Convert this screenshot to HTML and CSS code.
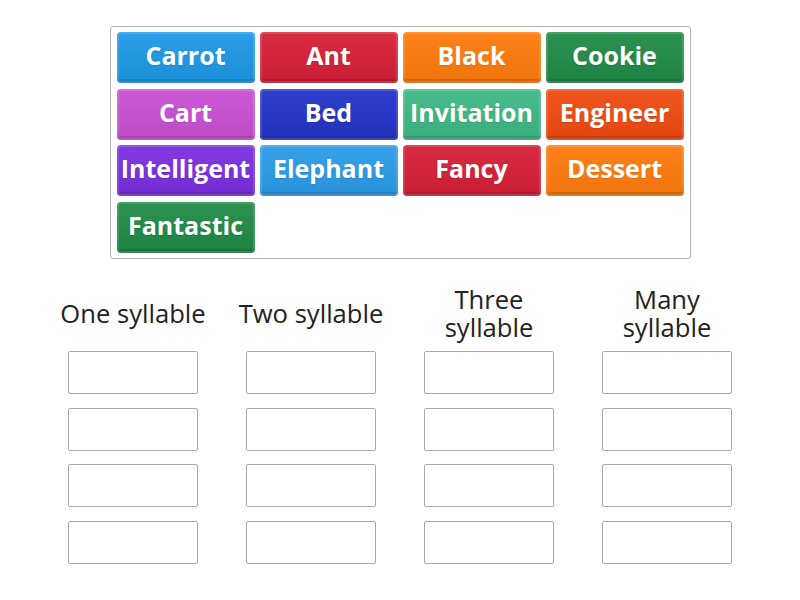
FILE: index.html
```html
<!DOCTYPE html>
<html>
<head>
<meta charset="utf-8">
<link rel="stylesheet" href="styles.css">
</head>
<body>
<div class="page">
  <div class="bank">
    <div class="tile c-blue">Carrot</div>
    <div class="tile c-red">Ant</div>
    <div class="tile c-orange">Black</div>
    <div class="tile c-green">Cookie</div>
    <div class="tile c-pink">Cart</div>
    <div class="tile c-navy">Bed</div>
    <div class="tile c-teal">Invitation</div>
    <div class="tile c-vermil">Engineer</div>
    <div class="tile c-purple">Intelligent</div>
    <div class="tile c-sky">Elephant</div>
    <div class="tile c-red">Fancy</div>
    <div class="tile c-orange">Dessert</div>
    <div class="tile c-green">Fantastic</div>
  </div>
  <div class="groups">
    <div class="group">
      <div class="label">One syllable</div>
      <div class="slot"></div><div class="slot"></div><div class="slot"></div><div class="slot"></div>
    </div>
    <div class="group">
      <div class="label">Two syllable</div>
      <div class="slot"></div><div class="slot"></div><div class="slot"></div><div class="slot"></div>
    </div>
    <div class="group">
      <div class="label">Three syllable</div>
      <div class="slot"></div><div class="slot"></div><div class="slot"></div><div class="slot"></div>
    </div>
    <div class="group">
      <div class="label">Many syllable</div>
      <div class="slot"></div><div class="slot"></div><div class="slot"></div><div class="slot"></div>
    </div>
  </div>
</div>
</body>
</html>
```

FILE: styles.css
```css
html, body {
  margin: 0;
  padding: 0;
  background: #fff;
}
body {
  font-family: "Open Sans", "Liberation Sans", sans-serif;
  width: 800px;
  height: 600px;
  overflow: hidden;
}
.page {
  display: flex;
  flex-direction: column;
  align-items: center;
  padding-top: 26px;
}
.bank {
  box-sizing: border-box;
  width: 581px;
  height: 233px;
  border: 1px solid #b4b4b4;
  border-radius: 3px;
  padding: 5px 6px 6px;
  display: grid;
  grid-template-columns: repeat(4, 138px);
  grid-auto-rows: 51px;
  column-gap: 5px;
  row-gap: 5.5px;
  align-content: start;
}
.tile {
  border-radius: 4px;
  color: #fff;
  font-weight: 700;
  font-size: 25px;
  display: flex;
  align-items: center;
  justify-content: center;
  white-space: nowrap;
  padding-bottom: 5px;
  box-sizing: border-box;
  background-image: linear-gradient(to bottom, rgba(255,255,255,0.06), rgba(0,0,0,0.06));
  box-shadow: inset 0 0 0 2px rgba(255,255,255,0.14), inset 0 -4px 0 rgba(0,0,0,0.12);
  text-shadow: 0 1px 1px rgba(0,0,0,0.1);
}
.c-blue { background-color: #1d98e6; }
.c-red { background-color: #d51f36; }
.c-orange { background-color: #ff7b0c; }
.c-green { background-color: #1f8a46; }
.c-pink { background-color: #c94fd4; }
.c-navy { background-color: #2233c8; }
.c-teal { background-color: #3db885; }
.c-vermil { background-color: #f04a12; }
.c-purple { background-color: #7b2ee0; }
.c-sky { background-color: #2a9be8; }

.groups {
  display: flex;
  gap: 48px;
  margin-top: 25px;
}
.group {
  width: 130px;
  display: flex;
  flex-direction: column;
  align-items: center;
}
.label {
  width: 178px;
  height: 60px;
  box-sizing: border-box;
  padding: 0 12px;
  display: flex;
  align-items: center;
  justify-content: center;
  text-align: center;
  font-size: 25.6px;
  line-height: 28px;
  color: #222;
  margin-bottom: 7px;
}
.slot {
  box-sizing: border-box;
  width: 130px;
  height: 43px;
  border: 1px solid #aaa;
  border-radius: 2px;
  margin-bottom: 13.5px;
}
```
